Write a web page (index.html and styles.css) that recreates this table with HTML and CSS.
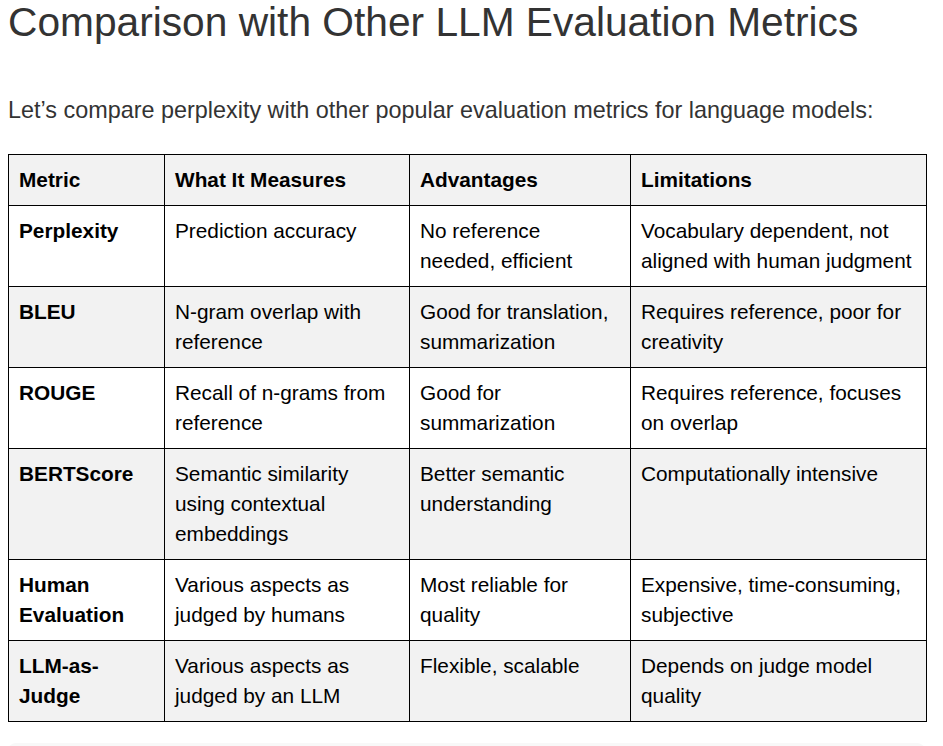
FILE: index.html
```html
<!DOCTYPE html>
<html>
<head>
<meta charset="utf-8">
<link rel="stylesheet" href="styles.css">
</head>
<body>
<h1 class="title">Comparison with Other LLM Evaluation Metrics</h1>
<p class="intro">Let’s compare perplexity with other popular evaluation metrics for language models:</p>
<table class="metrics">
  <colgroup>
    <col class="c1"><col class="c2"><col class="c3"><col class="c4">
  </colgroup>
  <thead>
    <tr><th>Metric</th><th>What It Measures</th><th>Advantages</th><th>Limitations</th></tr>
  </thead>
  <tbody>
    <tr><td class="name">Perplexity</td><td>Prediction accuracy</td><td>No reference needed, efficient</td><td>Vocabulary dependent, not aligned with human judgment</td></tr>
    <tr><td class="name">BLEU</td><td>N-gram overlap with reference</td><td>Good for translation, summarization</td><td>Requires reference, poor for creativity</td></tr>
    <tr><td class="name">ROUGE</td><td>Recall of n-grams from reference</td><td>Good for summarization</td><td>Requires reference, focuses on overlap</td></tr>
    <tr><td class="name">BERTScore</td><td>Semantic similarity using contextual embeddings</td><td>Better semantic understanding</td><td>Computationally intensive</td></tr>
    <tr><td class="name">Human Evaluation</td><td>Various aspects as judged by humans</td><td>Most reliable for quality</td><td>Expensive, time-consuming, subjective</td></tr>
    <tr><td class="name">LLM-as-Judge</td><td>Various aspects as judged by an LLM</td><td>Flexible, scalable</td><td>Depends on judge model quality</td></tr>
  </tbody>
</table>
<div class="next-block"></div>
</body>
</html>
```
FILE: styles.css
```css
html, body {
  margin: 0;
  background: #ffffff;
}
body {
  padding: 0 8px;
  font-family: "Liberation Sans", Arial, sans-serif;
  color: #333333;
}
.title {
  margin: 0;
  font-size: 40.7px;
  font-weight: normal;
  line-height: 45px;
}
.intro {
  margin: 49px 0 0;
  font-size: 23.4px;
  line-height: 33px;
}
.metrics {
  margin-top: 27px;
  width: 918px;
  border-collapse: collapse;
  table-layout: fixed;
  color: #000000;
  font-size: 20.8px;
  line-height: 30px;
}
.c1 { width: 156px; }
.c2 { width: 245px; }
.c3 { width: 221px; }
.c4 { width: 296px; }
.metrics th,
.metrics td {
  border: 1px solid #000000;
  padding: 10px;
  text-align: left;
  vertical-align: top;
}
.metrics th,
.metrics td.name {
  font-weight: bold;
}
.metrics thead tr,
.metrics tbody tr:nth-child(even) {
  background: #f2f2f2;
}
.next-block {
  margin-top: 21px;
  height: 20px;
  border-radius: 8px;
  background: #f8f8f8;
  width: 917px;
}
```
